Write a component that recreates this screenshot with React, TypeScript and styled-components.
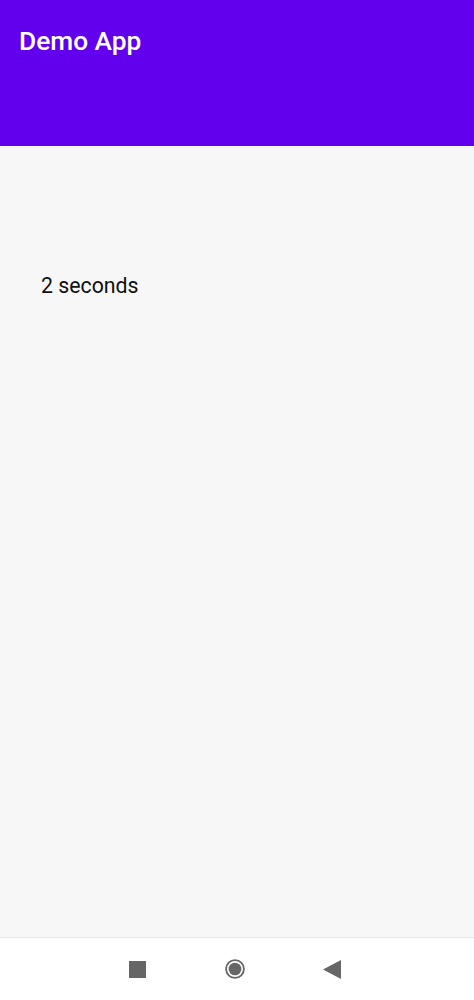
import React from "react";
import styled, { createGlobalStyle } from "styled-components";

const Global = createGlobalStyle`
  html, body { margin: 0; padding: 0; }
  body { font-family: Roboto, "Noto Sans", sans-serif; background: #ffffff; }
  #root { height: 1000px; }
`;

const Screen = styled.div`
  display: flex;
  flex-direction: column;
  width: 474px;
  height: 1000px;
  overflow: hidden;
`;

const AppBar = styled.header`
  height: 146px;
  background: #6200ee;
  box-sizing: border-box;
  padding: 24px 0 0 19px;
  flex-shrink: 0;
`;

const Title = styled.h1`
  margin: 0;
  font-family: Roboto, sans-serif;
  font-weight: 500;
  font-size: 26.3px;
  line-height: 34px;
  color: #ffffff;
`;

const Content = styled.main`
  flex: 1;
  background: #f7f7f7;
  padding: 126px 0 0 41px;
  box-sizing: border-box;
`;

const Label = styled.p`
  margin: 0;
  font-family: Roboto, sans-serif;
  font-size: 21.3px;
  line-height: 28px;
  color: #111111;
`;

const NavBar = styled.nav`
  height: 63px;
  flex-shrink: 0;
  background: #ffffff;
  border-top: 1px solid #e6e6e6;
  display: flex;
  align-items: center;
  justify-content: center;
  gap: 77px;
  padding-right: 5px;
  box-sizing: border-box;
`;

const NavButton = styled.div`
  width: 20px;
  height: 20px;
  display: flex;
  align-items: center;
  justify-content: center;
`;

export default function App() {
  return (
    <>
      <Global />
      <Screen>
        <AppBar>
          <Title>Demo App</Title>
        </AppBar>
        <Content>
          <Label>2 seconds</Label>
        </Content>
        <NavBar>
          <NavButton>
            <svg width="17" height="17" viewBox="0 0 17 17">
              <rect x="0" y="0" width="17" height="17" fill="#666666" />
            </svg>
          </NavButton>
          <NavButton>
            <svg width="22" height="22" viewBox="0 0 22 22">
              <circle cx="11" cy="11" r="9.8" fill="none" stroke="#666666" strokeWidth="2" />
              <circle cx="11" cy="11" r="7" fill="#666666" />
            </svg>
          </NavButton>
          <NavButton>
            <svg width="18" height="19" viewBox="0 0 18 19">
              <polygon points="18,0 18,19 0,9.5" fill="#666666" />
            </svg>
          </NavButton>
        </NavBar>
      </Screen>
    </>
  );
}
